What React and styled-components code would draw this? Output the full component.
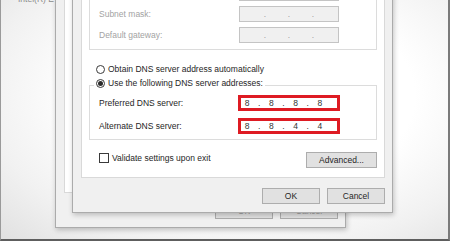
import { createGlobalStyle, styled } from "styled-components";

const GlobalStyle = createGlobalStyle`
  html, body {
    margin: 0;
    padding: 0;
    background: #ffffff;
  }
`;

const Desktop = styled.div`
  position: relative;
  width: 450px;
  height: 241px;
  box-sizing: border-box;
  overflow: hidden;
  border-left: 1px solid #9a9a9a;
  border-right: 2px solid #7a7a7a;
  border-bottom: 2px solid #5e5e5e;
  background: radial-gradient(
    ellipse 75% 85% at 55% 40%,
    #ffffff 50%,
    #f1f1f1 78%,
    #e2e2e2 100%
  );
  font-family: "Liberation Sans", Arial, sans-serif;
  font-size: 8.5px;
  line-height: 12px;
  color: #262626;
`;

const BackCaption = styled.span`
  position: absolute;
  left: 17px;
  top: -7px;
  color: #8c8c8c;
`;

const Window = styled.div`
  position: absolute;
  left: ${(p) => p.$left}px;
  top: ${(p) => p.$top}px;
  width: ${(p) => p.$width}px;
  height: ${(p) => p.$height}px;
  box-sizing: border-box;
  display: flex;
  flex-direction: column;
  padding: 0 7px 8px 8px;
  background: #f0f0f0;
  border: 1px solid #ababab;
  box-shadow: 1px 2px 5px rgba(0, 0, 0, 0.22);
`;

const Pane = styled.div`
  flex: 1;
  display: flex;
  flex-direction: column;
  padding: 0 7px;
  background: #ffffff;
  border: 1px solid #d9d9d9;
  border-top: none;
`;

const Footer = styled.div`
  display: flex;
  justify-content: flex-end;
  gap: 7px;
  margin-top: 10px;
`;

const Button = styled.button`
  width: ${(p) => p.$width || 58}px;
  height: 16px;
  padding: 0;
  box-sizing: border-box;
  background: #e1e1e1;
  border: 1px solid #adadad;
  font: inherit;
  color: ${(p) => (p.$ghost ? "#9a9a9a" : "#262626")};
`;

const Group = styled.div`
  display: flex;
  flex-direction: column;
  gap: 5px;
  padding: 3px 9px 6px;
  border: 1px solid #dcdcdc;
`;

const FieldSet = styled.fieldset`
  display: flex;
  flex-direction: column;
  gap: 7px;
  margin: 2px 0 0;
  padding: 2px 9px 5px;
  border: 1px solid #dcdcdc;
  min-width: 0;
`;

const Legend = styled.legend`
  display: flex;
  align-items: center;
  gap: 3px;
  height: 16px;
  box-sizing: border-box;
  padding: 0 2px 4px;
  margin-left: -5px;
  background: #ffffff;
`;

const Row = styled.div`
  display: grid;
  grid-template-columns: 140px auto;
  align-items: center;
  height: 16px;
  color: ${(p) => (p.$disabled ? "#a3a3a3" : "inherit")};
`;

const IpField = styled.div`
  display: flex;
  align-items: center;
  justify-content: center;
  width: ${(p) => (p.$marked ? 102 : 100)}px;
  height: 16px;
  box-sizing: border-box;
  margin-left: ${(p) => (p.$marked ? -1 : 0)}px;
  padding-right: ${(p) => (p.$marked ? 11 : 0)}px;
  background: ${(p) => (p.$marked ? "#ffffff" : "#f0f0f0")};
  border: ${(p) => (p.$marked ? "3px solid #de1b23" : "1px solid #c4c4c4")};
  color: #333333;
`;

const Octet = styled.span`
  width: ${(p) => (p.$filled ? 12.5 : 21)}px;
  text-align: center;
`;

const Dot = styled.span`
  width: ${(p) => (p.$filled ? 12.5 : 3)}px;
  text-align: center;
  color: ${(p) => (p.$filled ? "#333333" : "#a0a0a0")};
`;

const RadioRow = styled.label`
  display: flex;
  align-items: center;
  gap: 3px;
  height: 12px;
  margin: 13px 0 0 7px;
`;

const Radio = styled.span`
  position: relative;
  width: 9px;
  height: 9px;
  box-sizing: border-box;
  border: 1px solid #3a3a3a;
  border-radius: 50%;
  background: #ffffff;

  &::after {
    content: "";
    display: ${(p) => (p.$checked ? "block" : "none")};
    position: absolute;
    left: 1px;
    top: 1px;
    width: 5px;
    height: 5px;
    border-radius: 50%;
    background: #2b2b2b;
  }
`;

const BottomRow = styled.div`
  display: flex;
  justify-content: space-between;
  align-items: flex-start;
  margin-top: 12px;
`;

const CheckRow = styled.label`
  display: flex;
  align-items: center;
  gap: 3px;
  height: 11px;
  margin-left: 10px;
`;

const CheckBox = styled.span`
  width: 10px;
  height: 10px;
  box-sizing: border-box;
  border: 1px solid #3a3a3a;
  background: #ffffff;
`;

function IpAddress({ octets, marked }) {
  const parts = octets || ["", "", "", ""];
  const filled = Boolean(octets);
  const items = [];
  parts.forEach((o, i) => {
    if (i > 0) {
      items.push(
        <Dot key={`d${i}`} $filled={filled}>
          .
        </Dot>
      );
    }
    items.push(
      <Octet key={`o${i}`} $filled={filled}>
        {o}
      </Octet>
    );
  });
  return <IpField $marked={marked}>{items}</IpField>;
}

export default function App() {
  return (
    <>
      <GlobalStyle />
      <Desktop>
        <BackCaption>Intel(R) E</BackCaption>

        <Window $left={54} $top={-20} $width={291} $height={248}>
          <Pane />
          <Footer>
            <Button $ghost>OK</Button>
            <Button $ghost>Cancel</Button>
          </Footer>
        </Window>

        <Window $left={71} $top={-20} $width={321} $height={233}>
          <Pane>
            <Group>
              <Row $disabled>
                <span>IP address:</span>
                <IpAddress />
              </Row>
              <Row $disabled>
                <span>Subnet mask:</span>
                <IpAddress />
              </Row>
              <Row $disabled>
                <span>Default gateway:</span>
                <IpAddress />
              </Row>
            </Group>

            <RadioRow>
              <Radio />
              <span>Obtain DNS server address automatically</span>
            </RadioRow>

            <FieldSet>
              <Legend>
                <Radio $checked />
                <span>Use the following DNS server addresses:</span>
              </Legend>
              <Row>
                <span>Preferred DNS server:</span>
                <IpAddress marked octets={["8", "8", "8", "8"]} />
              </Row>
              <Row>
                <span>Alternate DNS server:</span>
                <IpAddress marked octets={["8", "8", "4", "4"]} />
              </Row>
            </FieldSet>

            <BottomRow>
              <CheckRow>
                <CheckBox />
                <span>Validate settings upon exit</span>
              </CheckRow>
              <Button $width={71}>Advanced...</Button>
            </BottomRow>
          </Pane>
          <Footer>
            <Button>OK</Button>
            <Button>Cancel</Button>
          </Footer>
        </Window>
      </Desktop>
    </>
  );
}
